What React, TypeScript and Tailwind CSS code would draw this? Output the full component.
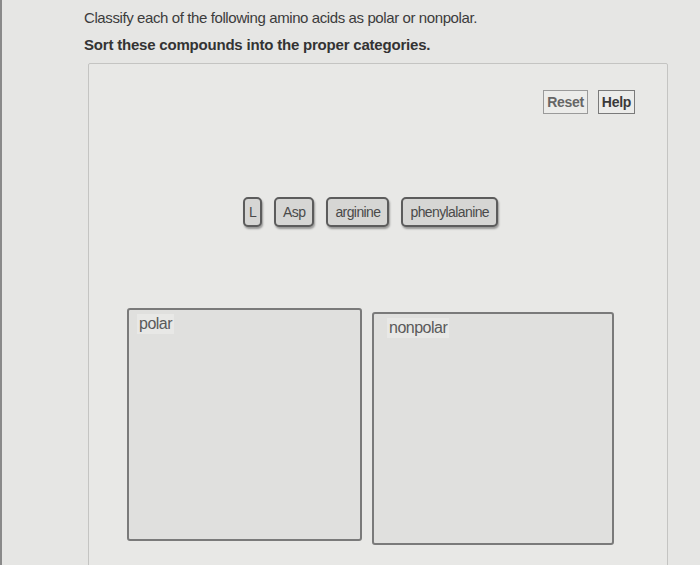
import React from "react";

const compounds = ["L", "Asp", "arginine", "phenylalanine"];

function Chip({ label }: { label: string }) {
  return (
    <div
      className={`h-[30px] flex items-center rounded-[5px] border-2 border-[#5c5c5c] bg-[#d6d6d4] text-[14px] text-[#4a4a4a] shadow-[1px_2px_2px_rgba(0,0,0,0.35)] tracking-[-0.6px] ${
        label.length === 1 ? "px-[4px]" : "px-[7px]"
      }`}
    >
      {label}
    </div>
  );
}

function DropBox({ title, className }: { title: string; className: string }) {
  return (
    <div
      className={`h-[233px] rounded-[3px] border-2 border-[#7a7a7a] bg-[#e0e0de] ${className}`}
    >
      <div className="inline-block mt-[4px] px-[2px] bg-[#e8e8e6] text-[16px] leading-[20px] text-[#5a5a5a] tracking-[-0.5px]">
        {title}
      </div>
    </div>
  );
}

export default function App() {
  return (
    <div
      className="w-[700px] h-[565px] overflow-hidden bg-[#e6e6e4] border-l-2 border-[#8a8a8a] pl-[82px] pt-[8px]"
      style={{ fontFamily: '"Liberation Sans", Arial, sans-serif' }}
    >
      <p className="text-[15px] leading-[20px] text-[#3c3c3c] tracking-[-0.4px]">
        Classify each of the following amino acids as polar or nonpolar.
      </p>
      <p className="mt-[7px] text-[15px] leading-[20px] font-bold text-[#333] tracking-[-0.2px]">
        Sort these compounds into the proper categories.
      </p>

      <div className="mt-[8px] ml-[4px] w-[580px] h-[560px] rounded-[2px] border border-[#c4c4c2] bg-[#e8e8e6] pt-[26px]">
        <div className="flex justify-end gap-[10px] pr-[32px]">
          <button className="h-[24px] px-[3px] border border-[#9a9a9a] bg-[#ececea] text-[14px] font-bold text-[#666] tracking-[-0.3px]">
            Reset
          </button>
          <button className="h-[24px] px-[3px] border border-[#7a7a7a] bg-[#ececea] text-[14px] font-bold text-[#3a3a3a] tracking-[-0.3px]">
            Help
          </button>
        </div>

        <div className="mt-[83px] flex justify-center gap-[12px] pr-[15px]">
          {compounds.map((c) => (
            <Chip key={c} label={c} />
          ))}
        </div>

        <div className="mt-[81px] flex items-start gap-[10px] pl-[38px]">
          <DropBox title="polar" className="w-[235px] pl-[8px]" />
          <DropBox title="nonpolar" className="w-[242px] mt-[4px] pl-[13px]" />
        </div>
      </div>
    </div>
  );
}
